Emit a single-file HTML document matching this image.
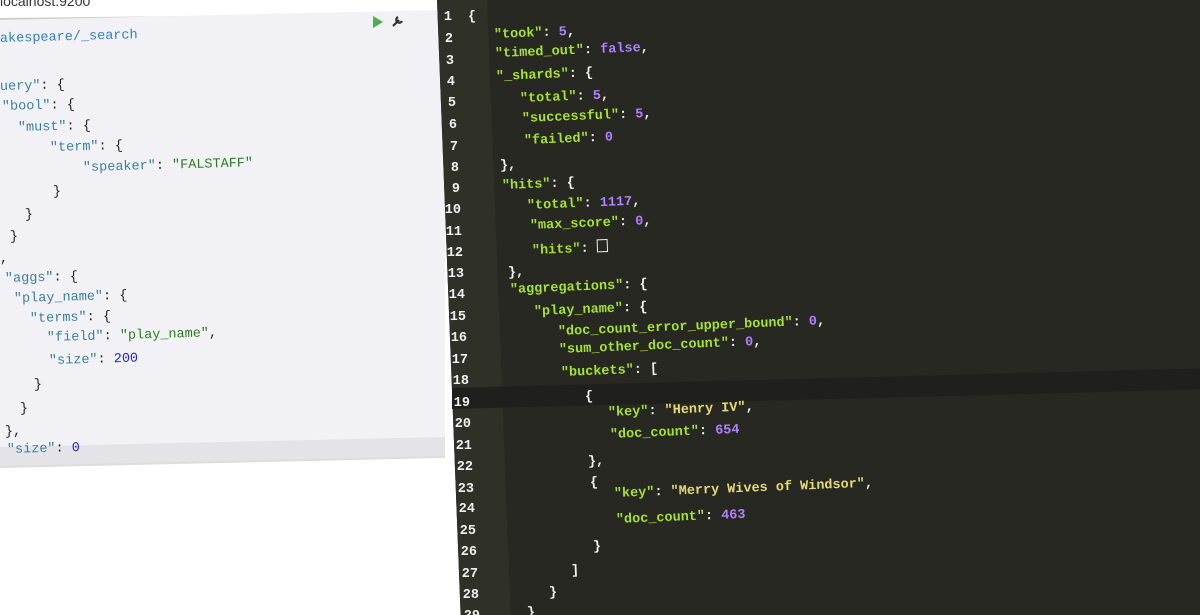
<!DOCTYPE html>
<html><head><meta charset="utf-8"><style>
html,body{margin:0;padding:0;width:1200px;height:615px;overflow:hidden;background:#fff;position:relative;font-family:"Liberation Mono",monospace}
.l{position:absolute;white-space:pre;font-size:13.5px;transform:rotate(-1.6deg);transform-origin:0 50%;line-height:16px}
.lp .k{color:#3b7f9e}.lp .s{color:#2a7d1f}.lp .n{color:#1f22d0}.lp{color:#222}
.d{position:absolute;white-space:pre;font-size:13.5px;font-weight:bold;color:#f4f4ee;transform:rotate(-2.3deg);transform-origin:0 50%;line-height:16px}
.d .k{color:#a6e22e}.d .s{color:#e6db74}.d .n{color:#ae81ff}
.num{position:absolute;font-size:13.5px;font-weight:bold;color:#f0f0f0;width:30px;text-align:right;line-height:16px}
</style></head><body>
<div style="position:absolute;left:0;top:0;width:445px;height:18px;background:#fff"></div>
<div style="position:absolute;left:0;top:-7px;font-family:'Liberation Sans',sans-serif;font-size:14px;color:#333">localhost:9200</div>
<div style="position:absolute;left:0;top:18px;width:440px;height:2px;background:#ccc;transform:rotate(-0.6deg);transform-origin:0 0"></div>
<div style="position:absolute;left:0;top:20px;width:445px;height:445px;background:#f2f2f6;transform:skewY(-1.3deg);transform-origin:0 0"></div>
<div style="position:absolute;left:0;top:447px;width:445px;height:20px;background:#e3e3e8;transform:skewY(-1.3deg);transform-origin:0 0"></div>
<div style="position:absolute;left:0;top:466px;width:445px;height:2px;background:#ddd;transform:skewY(-1.3deg);transform-origin:0 0"></div>
<svg style="position:absolute;left:371px;top:15px" width="14" height="14"><path d="M2 1 L12 7 L2 13Z" fill="#4cb14c"/></svg>
<svg style="position:absolute;left:391px;top:14px" width="14" height="14"><path d="M2 12 L8 6 M7 3 a3 3 0 1 0 4 4" stroke="#333" stroke-width="2.2" fill="none"/></svg>

<div class="l lp" style="left:0;top:32px;color:#2f7fc0">akespeare/_search</div>
<div class="l lp" style="left:0;top:80px"><span class="k">uery"</span>: {</div>
<div class="l lp" style="left:2px;top:100px"><span class="k">"bool"</span>: {</div>
<div class="l lp" style="left:18px;top:121px"><span class="k">"must"</span>: {</div>
<div class="l lp" style="left:50px;top:141px"><span class="k">"term"</span>: {</div>
<div class="l lp" style="left:83px;top:161px"><span class="k">"speaker"</span>: <span class="s">"FALSTAFF"</span></div>
<div class="l lp" style="left:53px;top:185px">}</div>
<div class="l lp" style="left:25px;top:208px">}</div>
<div class="l lp" style="left:10px;top:230px">}</div>
<div class="l lp" style="left:0;top:252px">,</div>
<div class="l lp" style="left:5px;top:272px"><span class="k">"aggs"</span>: {</div>
<div class="l lp" style="left:14px;top:292px"><span class="k">"play_name"</span>: {</div>
<div class="l lp" style="left:30px;top:312px"><span class="k">"terms"</span>: {</div>
<div class="l lp" style="left:47px;top:331px"><span class="k">"field"</span>: <span class="s">"play_name"</span>,</div>
<div class="l lp" style="left:49px;top:354px"><span class="k">"size"</span>: <span class="n">200</span></div>
<div class="l lp" style="left:34px;top:378px">}</div>
<div class="l lp" style="left:20px;top:402px">}</div>
<div class="l lp" style="left:5px;top:425px">},</div>
<div class="l lp" style="left:7px;top:443px"><span class="k">"size"</span>: <span class="n">0</span></div>

<div style="position:absolute;left:437px;top:0;width:800px;height:640px;background:#272822;transform:skewX(2.2deg);transform-origin:0 0"></div>
<div style="position:absolute;left:437px;top:0;width:50px;height:640px;background:#2f3129;transform:skewX(2.2deg);transform-origin:0 0"></div>
<div style="position:absolute;left:452px;top:388px;width:760px;height:21px;background:#1f201b;transform:skewY(-1.5deg);transform-origin:0 0"></div>

<div class="num" style="left:422px;top:10px">1</div>
<div class="num" style="left:423px;top:32px">2</div>
<div class="num" style="left:424px;top:54px">3</div>
<div class="num" style="left:425px;top:75px">4</div>
<div class="num" style="left:426px;top:96px">5</div>
<div class="num" style="left:427px;top:118px">6</div>
<div class="num" style="left:428px;top:140px">7</div>
<div class="num" style="left:429px;top:161px">8</div>
<div class="num" style="left:430px;top:182px">9</div>
<div class="num" style="left:431px;top:203px">10</div>
<div class="num" style="left:432px;top:225px">11</div>
<div class="num" style="left:433px;top:246px">12</div>
<div class="num" style="left:434px;top:267px">13</div>
<div class="num" style="left:435px;top:288px">14</div>
<div class="num" style="left:436px;top:310px">15</div>
<div class="num" style="left:437px;top:331px">16</div>
<div class="num" style="left:438px;top:353px">17</div>
<div class="num" style="left:439px;top:374px">18</div>
<div class="num" style="left:440px;top:396px">19</div>
<div class="num" style="left:441px;top:417px">20</div>
<div class="num" style="left:442px;top:439px">21</div>
<div class="num" style="left:443px;top:460px">22</div>
<div class="num" style="left:444px;top:482px">23</div>
<div class="num" style="left:445px;top:502px">24</div>
<div class="num" style="left:446px;top:524px">25</div>
<div class="num" style="left:447px;top:545px">26</div>
<div class="num" style="left:448px;top:567px">27</div>
<div class="num" style="left:449px;top:588px">28</div>
<div class="num" style="left:450px;top:609px">29</div>

<div class="d" style="left:468px;top:10px">{</div>
<div class="d" style="left:494px;top:28px"><span class="k">"took"</span>: <span class="n">5</span>,</div>
<div class="d" style="left:495px;top:47px"><span class="k">"timed_out"</span>: <span class="n">false</span>,</div>
<div class="d" style="left:496px;top:70px"><span class="k">"_shards"</span>: {</div>
<div class="d" style="left:520px;top:92px"><span class="k">"total"</span>: <span class="n">5</span>,</div>
<div class="d" style="left:522px;top:112px"><span class="k">"successful"</span>: <span class="n">5</span>,</div>
<div class="d" style="left:524px;top:134px"><span class="k">"failed"</span>: <span class="n">0</span></div>
<div class="d" style="left:500px;top:159px">},</div>
<div class="d" style="left:502px;top:179px"><span class="k">"hits"</span>: {</div>
<div class="d" style="left:527px;top:199px"><span class="k">"total"</span>: <span class="n">1117</span>,</div>
<div class="d" style="left:530px;top:219px"><span class="k">"max_score"</span>: <span class="n">0</span>,</div>
<div class="d" style="left:532px;top:242px"><span class="k">"hits"</span>: <span style="border:1.5px solid #eee;display:inline-block;width:9px;height:11px;vertical-align:-1px"></span></div>
<div class="d" style="left:508px;top:266px">},</div>
<div class="d" style="left:510px;top:283px"><span class="k">"aggregations"</span>: {</div>
<div class="d" style="left:534px;top:305px"><span class="k">"play_name"</span>: {</div>
<div class="d" style="left:558px;top:325px"><span class="k">"doc_count_error_upper_bound"</span>: <span class="n">0</span>,</div>
<div class="d" style="left:559px;top:343px"><span class="k">"sum_other_doc_count"</span>: <span class="n">0</span>,</div>
<div class="d" style="left:561px;top:366px"><span class="k">"buckets"</span>: [</div>
<div class="d" style="left:585px;top:390px">{</div>
<div class="d" style="left:608px;top:406px"><span class="k">"key"</span>: <span class="s">"Henry IV"</span>,</div>
<div class="d" style="left:610px;top:428px"><span class="k">"doc_count"</span>: <span class="n">654</span></div>
<div class="d" style="left:588px;top:455px">},</div>
<div class="d" style="left:590px;top:476px">{</div>
<div class="d" style="left:614px;top:487px"><span class="k">"key"</span>: <span class="s">"Merry Wives of Windsor"</span>,</div>
<div class="d" style="left:616px;top:513px"><span class="k">"doc_count"</span>: <span class="n">463</span></div>
<div class="d" style="left:593px;top:540px">}</div>
<div class="d" style="left:571px;top:564px">]</div>
<div class="d" style="left:549px;top:586px">}</div>
<div class="d" style="left:527px;top:606px">}</div>
</body></html>
